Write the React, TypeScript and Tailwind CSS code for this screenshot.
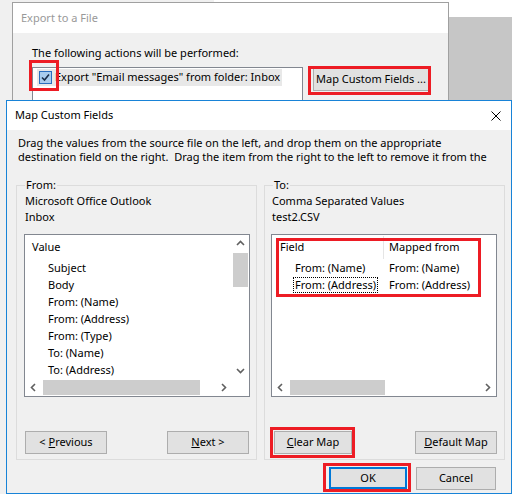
import React from "react";

function Chevron({ dir }: { dir: "up" | "down" | "left" | "right" }) {
  const pts = {
    up: "1,6 4.5,2.5 8,6",
    down: "1,3 4.5,6.5 8,3",
    left: "6,1 2.5,4.5 6,8",
    right: "3,1 6.5,4.5 3,8",
  }[dir];
  return (
    <svg width="9" height="9" viewBox="0 0 9 9">
      <polyline points={pts} fill="none" stroke="#606060" strokeWidth="1.6" />
    </svg>
  );
}

function Btn({ children, w, primary }: { children: React.ReactNode; w: string; primary?: boolean }) {
  return (
    <div
      className={`${w} flex items-center justify-center bg-[#e1e1e1] ${
        primary ? "h-[22px] border-2 border-[#0078d7]" : "h-[23px] border border-[#adadad]"
      }`}
    >
      {children}
    </div>
  );
}

function HScroll({ thumbLeft, thumbWidth }: { thumbLeft: string; thumbWidth: string }) {
  return (
    <div className="flex h-[17px] items-center bg-white">
      <div className="flex w-[17px] justify-center">
        <Chevron dir="left" />
      </div>
      <div className="relative h-full flex-1">
        <div className={`absolute top-[1px] bottom-[1px] bg-[#cdcdcd] ${thumbLeft} ${thumbWidth}`} />
      </div>
      <div className="flex w-[17px] justify-center">
        <Chevron dir="right" />
      </div>
    </div>
  );
}

const sourceFields = [
  "Subject",
  "Body",
  "From: (Name)",
  "From: (Address)",
  "From: (Type)",
  "To: (Name)",
  "To: (Address)",
];

function ExportWindow() {
  return (
    <div className="absolute left-[12px] top-[2px] w-[437px] h-[130px] border border-[#a0a0a0] bg-[#f0f0f0]">
      <div className="flex h-[30px] items-center bg-white pl-[8px] text-[#999999]">Export to a File</div>
      <div className="pl-[19px] pt-[12px]">
        <div className="leading-[16px]">The following actions will be performed:</div>
        <div className="mt-[6px] flex items-start gap-[10px]">
          <div className="h-[60px] w-[271px] border border-[#828790] bg-white">
            <div className="ml-[4px] mt-[1px] flex h-[17px] w-[245px] items-center bg-[#e8e8e8]">
              <div className="ml-[2px] flex h-[13px] w-[13px] items-center justify-center border border-[#2a6fbf] bg-[#a9cdee]">
                <svg width="11" height="11" viewBox="0 0 11 11">
                  <polyline points="2,5.5 4.5,8 9,2.5" fill="none" stroke="#1b2f4a" strokeWidth="1.6" />
                </svg>
              </div>
              <span className="ml-[3px] whitespace-nowrap">Export "Email messages" from folder: Inbox</span>
            </div>
          </div>
          <div className="mt-[1px]">
            <Btn w="w-[116px]">
              <span className="whitespace-nowrap">Map Custom Fields ...</span>
            </Btn>
          </div>
        </div>
      </div>
    </div>
  );
}

function SourceList() {
  return (
    <div className="flex h-[163px] w-[226px] flex-col border border-[#828790] bg-white">
      <div className="flex flex-1 overflow-hidden">
        <div className="flex-1 overflow-hidden">
          <div className="flex h-[25px] items-center pl-[7px]">Value</div>
          {sourceFields.map((f) => (
            <div key={f} className="flex h-[17px] items-center whitespace-nowrap pl-[23px]">
              {f}
            </div>
          ))}
        </div>
        <div className="flex w-[17px] flex-col items-center">
          <div className="flex h-[17px] items-center">
            <Chevron dir="up" />
          </div>
          <div className="mt-[1px] h-[34px] w-[15px] bg-[#cdcdcd]" />
          <div className="flex-1" />
          <div className="flex h-[17px] items-center">
            <Chevron dir="down" />
          </div>
        </div>
      </div>
      <div className="flex">
        <div className="flex-1">
          <HScroll thumbLeft="left-[1px]" thumbWidth="w-[157px]" />
        </div>
        <div className="w-[17px] bg-white" />
      </div>
    </div>
  );
}

function TargetList() {
  return (
    <div className="flex h-[163px] w-[226px] flex-col border border-[#828790] bg-white">
      <div className="flex-1 overflow-hidden">
        <div className="flex h-[25px]">
          <div className="my-[1px] flex w-[112px] items-center border-r border-[#e5e5e5] pl-[8px]">Field</div>
          <div className="flex items-center pl-[5px]">Mapped from</div>
        </div>
        <div className="flex h-[17px] items-center whitespace-nowrap">
          <div className="w-[112px] pl-[23px]">From: (Name)</div>
          <div className="pl-[5px]">From: (Name)</div>
        </div>
        <div className="flex h-[17px] items-center whitespace-nowrap">
          <div className="w-[112px] pl-[21px]">
            <span className="inline-block h-[16px] border border-dotted border-black px-[1px] leading-[14px]">
              From: (Address)
            </span>
          </div>
          <div className="pl-[5px]">From: (Address)</div>
        </div>
      </div>
      <HScroll thumbLeft="left-[1px]" thumbWidth="w-[95px]" />
    </div>
  );
}

function MapDialog() {
  return (
    <div className="absolute left-[6px] top-[100px] flex h-[394px] w-[506px] flex-col border border-[#1883d7] bg-[#f0f0f0]">
      <div className="flex h-[29px] items-center justify-between bg-white pl-[8px] pr-[10px]">
        <span>Map Custom Fields</span>
        <svg width="10" height="10" viewBox="0 0 10 10">
          <path d="M0.5 0.5 L9.5 9.5 M9.5 0.5 L0.5 9.5" stroke="#000" strokeWidth="1" />
        </svg>
      </div>
      <div className="pl-[11px] pt-[6px] leading-[14px] whitespace-nowrap">
        <div>Drag the values from the source file on the left, and drop them on the appropriate</div>
        <div>destination field on the right.&nbsp; Drag the item from the right to the left to remove it from the</div>
      </div>
      <div className="ml-[9px] mt-[13px] flex gap-[7px]">
        <fieldset className="w-[241px] border border-[#dcdcdc] pb-[5px] pl-[7px]">
          <legend className="ml-[1px] px-[1px] leading-[16px]">From:</legend>
          <div className="pl-[1px] leading-[16px]">Microsoft Office Outlook</div>
          <div className="pl-[1px] leading-[16px]">Inbox</div>
          <div className="mt-[9px]">
            <SourceList />
          </div>
          <div className="mt-[34px] flex w-[226px] justify-between px-[1px]">
            <Btn w="w-[82px]">
              <span>
                &lt; <span className="underline">P</span>revious
              </span>
            </Btn>
            <Btn w="w-[82px]">
              <span>
                <span className="underline">N</span>ext &gt;
              </span>
            </Btn>
          </div>
        </fieldset>
        <fieldset className="w-[241px] border border-[#dcdcdc] pb-[5px] pl-[6px]">
          <legend className="ml-[2px] px-[1px] leading-[16px]">To:</legend>
          <div className="pl-[1px] leading-[16px]">Comma Separated Values</div>
          <div className="pl-[1px] leading-[16px]">test2.CSV</div>
          <div className="mt-[9px]">
            <TargetList />
          </div>
          <div className="mt-[34px] flex w-[226px] justify-between pl-[3px]">
            <Btn w="w-[78px]">
              <span>
                <span className="underline">C</span>lear Map
              </span>
            </Btn>
            <Btn w="w-[82px]">
              <span>
                <span className="underline">D</span>efault Map
              </span>
            </Btn>
          </div>
        </fieldset>
      </div>
      <div className="mt-[7px] flex justify-end gap-[9px] pr-[15px]">
        <Btn w="w-[78px]" primary>
          OK
        </Btn>
        <Btn w="w-[80px]">Cancel</Btn>
      </div>
    </div>
  );
}

export default function App() {
  return (
    <div className="relative h-[494px] w-[512px] overflow-hidden bg-[#f0f0f0] font-['Segoe_UI','Noto_Sans',sans-serif] text-[11px] text-black">
      {/* desktop behind the dialogs */}
      <div className="absolute left-[214px] right-0 top-0 h-[17px] bg-white" />
      <div className="absolute left-[448px] right-0 top-[17px] bottom-0 bg-[#c6c6c6]" />

      <ExportWindow />
      <MapDialog />

      {/* red annotation boxes */}
      <div className="absolute left-[29px] top-[60px] h-[31px] w-[30px] border-[3px] border-[#ed1c24]" />
      <div className="absolute left-[308px] top-[66px] h-[29px] w-[123px] border-[3px] border-[#ed1c24]" />
      <div className="absolute left-[276px] top-[238px] h-[59px] w-[205px] border-[3px] border-[#ed1c24]" />
      <div className="absolute left-[270px] top-[427px] h-[31px] w-[85px] border-[3px] border-[#ed1c24]" />
      <div className="absolute left-[323px] top-[463px] h-[29px] w-[88px] border-[3px] border-[#ed1c24]" />
    </div>
  );
}
